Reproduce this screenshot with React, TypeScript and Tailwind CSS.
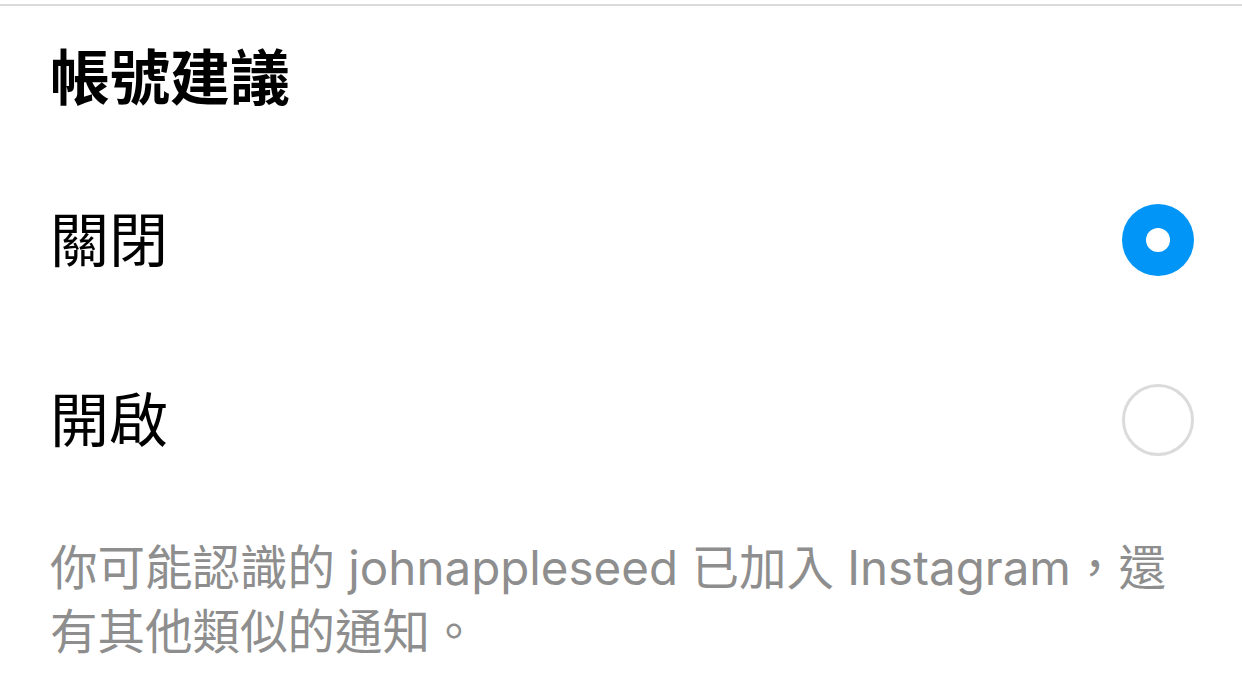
import React, { useState } from "react";

const FONT = {
  fontFamily: '"Inter", "Noto Sans CJK TC", "Noto Sans", sans-serif',
} as const;

type Option = { key: string; label: string };

const OPTIONS: Option[] = [
  { key: "off", label: "關閉" },
  { key: "on", label: "開啟" },
];

function Radio({ checked }: { checked: boolean }) {
  if (checked) {
    return (
      <span className="flex h-[72px] w-[72px] items-center justify-center rounded-full bg-[#0095f6]">
        <span className="h-[24px] w-[24px] rounded-full bg-white" />
      </span>
    );
  }
  return (
    <span className="block h-[72px] w-[72px] rounded-full border-[3px] border-[#dbdbdb] bg-white" />
  );
}

export default function App() {
  const [value, setValue] = useState("off");

  return (
    <div
      className="min-h-[692px] w-full overflow-hidden bg-white text-black"
      style={FONT}
    >
      <div className="mt-[4px] h-[2px] w-full bg-[#dbdbdb]" />

      <div className="flex h-[144px] items-center px-[50px]">
        <h1 className="text-[60px] font-bold leading-none">帳號建議</h1>
      </div>

      {OPTIONS.map((opt) => (
        <button
          key={opt.key}
          type="button"
          onClick={() => setValue(opt.key)}
          className="flex h-[180px] w-full items-center justify-between pl-[50px] pr-[48px] text-left"
        >
          <span className="text-[59px] leading-none">{opt.label}</span>
          <Radio checked={value === opt.key} />
        </button>
      ))}

      <p className="px-[50px] pt-[26px] text-[47.5px] leading-[64px] text-[#8e8e8e] whitespace-nowrap">
        你可能認識的 johnappleseed 已加入 Instagram，還
        <br />
        有其他類似的通知。
      </p>
    </div>
  );
}
